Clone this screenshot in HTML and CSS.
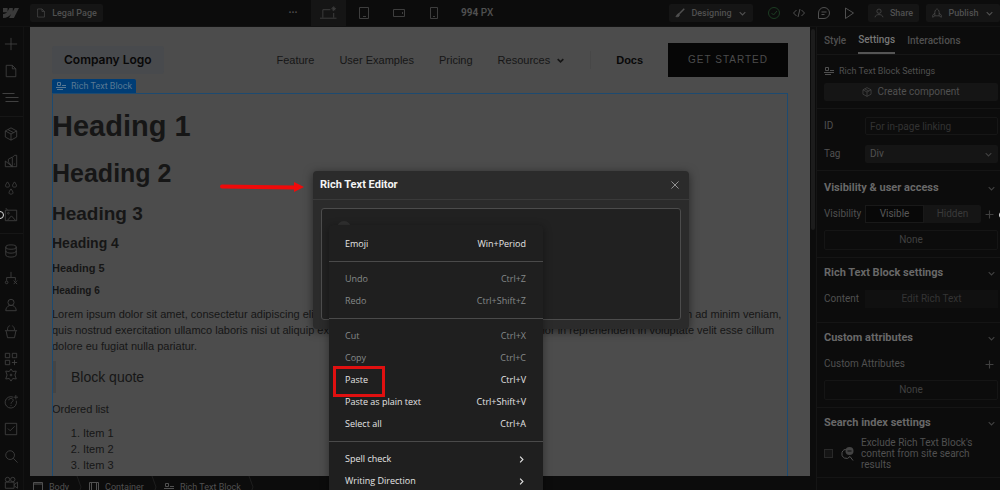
FILE: index.html
```html
<!DOCTYPE html>
<html lang="en">
  <head>
    <meta charset="utf-8">
    <title>Legal Page</title>
    <link rel="stylesheet" href="styles.css">
  </head>
  <body>
    <svg class="sprite" aria-hidden="true">
      <symbol id="i-page" viewBox="0 0 16 16"><path d="M2.5 1.5h7l4 4v9h-11zM9.5 1.5v4h4"/></symbol>
      <symbol id="i-plus" viewBox="0 0 16 16"><path d="M8 1v14M1 8h14"/></symbol>
      <symbol id="i-chevron" viewBox="0 0 16 16"><path d="M3 5.500l5 5 5-5"/></symbol>
      <symbol id="i-next" viewBox="0 0 16 16"><path d="M5.500 3l5 5-5 5"/></symbol>
      <symbol id="i-rich" viewBox="0 0 10 10"><path d="M1.500 1.500h3v3h-3zM6 4.500h4M0 6.500h10M1 8.500h6"/></symbol>
      <symbol id="i-cube" viewBox="0 0 16 16"><path d="M8 1l6.500 3.500v7L8 15l-6.500-3.500v-7zM1.500 4.500L8 8l6.500-3.500M8 8v7M4.500 3L11 6.500"/></symbol>
    </svg>

    <div class="app">
      <header class="topbar">
        <svg class="brand" viewBox="0 0 16 10"><path d="M16 0l-5.100 10H6.100l2.100-4.100C6.500 8.200 4 9.700 0 10V6s2.600-.2 4.100-1.800H0V0h4.600v3.500L6.400 0h3.400v3.500L11.700 0z"/></svg>
        <button class="chip chip-page"><svg class="icon small"><use href="#i-page"/></svg>Legal Page</button>
        <button class="dots" aria-label="More">···</button>
        <div class="devices">
          <button class="device active" aria-label="Desktop"><svg class="icon wide" viewBox="0 0 18 14"><path d="M3 12V3.500h8M14.500 7v5M0 12.500h17.500M14.500 0v5M12 2.500h5M13 1l3 3M16 1l-3 3"/></svg></button>
          <button class="device" aria-label="Tablet"><svg class="icon" viewBox="0 0 14 14"><path d="M2.500 1.500h9v11h-9zM6 10.500h3"/></svg></button>
          <button class="device" aria-label="Phone landscape"><svg class="icon" viewBox="0 0 14 14"><path d="M1.500 3.500h11v7h-11zM10.500 6v2"/></svg></button>
          <button class="device" aria-label="Phone"><svg class="icon" viewBox="0 0 14 14"><path d="M3.500 1.500h7v11h-7zM6 10.500h2"/></svg></button>
        </div>
        <span class="size"><b>994</b> PX</span>
        <div class="actions">
          <button class="chip chip-mode"><svg class="icon small" viewBox="0 0 14 14"><path d="M13 1L6 8" stroke-width="2"/><path class="solid" d="M6 8c-3-1-3 3-5 4 3 1 6 0 5-4z"/></svg>Designing<svg class="icon tiny"><use href="#i-chevron"/></svg></button>
          <button class="tool ok" aria-label="Saved"><svg class="icon" viewBox="0 0 14 14"><circle cx="7" cy="7" r="5.500"/><path d="M4.500 7l2 2 3.500-4"/></svg></button>
          <button class="tool" aria-label="Code"><svg class="icon" viewBox="0 0 14 14"><path d="M4.500 4l-3 3 3 3M9.500 4l3 3-3 3M8 3L6 11"/></svg></button>
          <button class="tool" aria-label="Comments"><svg class="icon" viewBox="0 0 14 14"><path d="M1.500 12.500V7A5.500 5.500 0 1 1 7 12.500zM4.500 6h5M4.500 8.500h3"/></svg></button>
          <button class="tool" aria-label="Preview"><svg class="icon" viewBox="0 0 14 14"><path d="M3.500 2l8 5-8 5.500z"/></svg></button>
          <button class="chip chip-share"><svg class="icon small" viewBox="0 0 14 14"><circle cx="7" cy="4.500" r="3"/><path d="M1.500 13c0-5 11-5 11 0"/></svg>Share</button>
          <button class="chip chip-publish"><svg class="icon small" viewBox="0 0 14 14"><path d="M4 11V6c0-3 2-4 3-5 1 1 3 2 3 5v5zM4 7l-3 3v3l3-2M10 7l3 3v3l-3-2"/></svg>Publish<svg class="icon tiny"><use href="#i-chevron"/></svg></button>
        </div>
      </header>

      <nav class="rail" aria-label="Tools">
        <div class="rail-group">
          <button aria-label="Add"><svg class="icon"><use href="#i-plus"/></svg></button>
          <button aria-label="Pages"><svg class="icon"><use href="#i-page"/></svg></button>
          <button aria-label="Navigator"><svg class="icon wide" viewBox="0 0 16 14"><path d="M0 2.500h12M3 6.500h13M3 10.500h13"/></svg></button>
        </div>
        <div class="rail-group">
          <button aria-label="Components"><svg class="icon"><use href="#i-cube"/></svg></button>
          <button aria-label="Variables"><svg class="icon" viewBox="0 0 16 16"><path d="M9.500 14.500V4L12 1.500h2.500v13zM9.500 3.500L5 6v3l4.500 5.500M1.500 8l8 6.500h-8zM12 11v1"/></svg></button>
          <button aria-label="Styles"><svg class="icon" viewBox="0 0 16 16"><path d="M4 1C1 5 1 7 4 7s3-2 0-6zM12 1c-3 4-3 6 0 6s3-2 0-6zM8 9c-3 4-3 6 0 6s3-2 0-6z"/></svg></button>
          <button aria-label="Assets"><svg class="icon" viewBox="0 0 16 16"><path d="M1.500 2.500h13v12h-13zM4 14l4.500-5 4.500 5M2 0l2 2.500"/><circle cx="5" cy="6" r="1"/></svg></button>
        </div>
        <div class="rail-group fill">
          <button aria-label="CMS"><svg class="icon" viewBox="0 0 16 16"><ellipse cx="8" cy="3.500" rx="6" ry="2.500"/><path d="M2 3.500v9c0 3.300 12 3.300 12 0v-9M2 8c0 3.300 12 3.300 12 0"/></svg></button>
          <button aria-label="Logic"><svg class="icon" viewBox="0 0 16 16"><path d="M8 1v6M3 11V7.500h10V11M11 11l4 4M15 11l-4 4"/><circle cx="3" cy="13" r="1.500"/></svg></button>
          <button aria-label="Users"><svg class="icon" viewBox="0 0 16 16"><circle cx="8" cy="5" r="3.500"/><path d="M2 14.500c0-3 2-5 4-6h4c2 1 4 3 4 6z"/></svg></button>
          <button aria-label="Ecommerce"><svg class="icon" viewBox="0 0 16 16"><path d="M1 6.500h14M2.500 7l1.500 7.500h8L13.500 7M4 6c0-6 3-5 3-5M12 6c0-4-2-5-3-5"/></svg></button>
          <button aria-label="Apps"><svg class="icon" viewBox="0 0 16 16"><path d="M1.500 1.500h5v5h-5zM9.500 1.500h5v5h-5zM1.500 9.500h5v5h-5zM12 9v6M9 12h6"/></svg></button>
        </div>
        <div class="rail-group bottom">
          <button aria-label="Settings"><svg class="icon" viewBox="0 0 16 16"><path d="M8 1l2 3 4-.5L12.500 8l1.500 4.500-4-.5-2 3-2-3-4 .5L3.500 8 2 3.500 6 4z"/><circle cx="8" cy="8" r="1"/></svg></button>
          <button aria-label="Help"><svg class="icon" viewBox="0 0 16 16"><path d="M10.500 2.500a6.500 6.500 0 1 0 3.500 4M13.500 0v5M11 2.500h5M5.500 6c0-3 5-2.500 5 0 0 2-2.500 1.500-2.500 4M8 11.500v1"/></svg></button>
          <button aria-label="Audit"><svg class="icon" viewBox="0 0 16 16"><path d="M1.500 1.500h13v13h-13zM4.500 7.500l2.500 2.500 5-5"/></svg></button>
          <button aria-label="Search"><svg class="icon" viewBox="0 0 16 16"><circle cx="7" cy="7" r="5"/><path d="M10.500 10.500l5 5"/></svg></button>
          <button aria-label="Video"><svg class="icon" viewBox="0 0 16 16"><path d="M1.500 7h10v7h-10zM11.500 10l4-3v7l-4-3"/><circle cx="4" cy="4" r="2.500"/><circle cx="10" cy="4" r="2.500"/></svg></button>
        </div>
      </nav>

      <main class="stage">
        <div class="canvas">
          <div class="site-header">
            <a class="logo" href="#">Company Logo</a>
            <nav class="site-nav">
              <a href="#">Feature</a>
              <a href="#">User Examples</a>
              <a href="#">Pricing</a>
              <a class="has-menu" href="#">Resources<svg class="icon tiny bold"><use href="#i-chevron"/></svg></a>
              <span class="rule"></span>
              <a class="docs" href="#">Docs</a>
              <button class="cta">GET STARTED</button>
            </nav>
          </div>
          <div class="tag"><svg class="icon small"><use href="#i-rich"/></svg>Rich Text Block</div>
          <article class="rich">
            <h1>Heading 1</h1>
            <h2>Heading 2</h2>
            <h3>Heading 3</h3>
            <h4>Heading 4</h4>
            <h5>Heading 5</h5>
            <h6>Heading 6</h6>
            <p>Lorem ipsum dolor sit amet, consectetur adipiscing elit, sed do eiusmod tempor incididunt ut labore et dolore magna aliqua. Ut enim ad minim veniam, quis nostrud exercitation ullamco laboris nisi ut aliquip ex ea commodo consequat. Duis aute irure dolor in reprehenderit in voluptate velit esse cillum dolore eu fugiat nulla pariatur.</p>
            <blockquote>Block quote</blockquote>
            <p>Ordered list</p>
            <ol>
              <li>Item 1</li>
              <li>Item 2</li>
              <li>Item 3</li>
            </ol>
          </article>
        </div>
        <div class="scroll"><div class="thumb"></div></div>
        <footer class="crumbs">
          <a href="#"><svg class="icon small" viewBox="0 0 10 10"><path d="M.5.500h9v9h-9zM.5 2h9"/></svg>Body</a>
          <svg class="icon sep" viewBox="0 0 6 22"><path d="M1 0l4 11-4 11"/></svg>
          <a href="#"><svg class="icon small" viewBox="0 0 10 10"><path d="M.5.500h9v9h-9zM2.500.500v9M7.500.500v9"/></svg>Container</a>
          <svg class="icon sep" viewBox="0 0 6 22"><path d="M1 0l4 11-4 11"/></svg>
          <a href="#"><svg class="icon small"><use href="#i-rich"/></svg>Rich Text Block</a>
          <svg class="icon sep" viewBox="0 0 6 22"><path d="M1 0l4 11-4 11"/></svg>
        </footer>
      </main>

      <aside class="panel">
        <div class="tabs" role="tablist">
          <button role="tab">Style</button>
          <button role="tab" class="current" aria-selected="true">Settings</button>
          <button role="tab">Interactions</button>
        </div>
        <section>
          <div class="element"><svg class="icon small"><use href="#i-rich"/></svg>Rich Text Block Settings</div>
          <button class="block-btn"><svg class="icon small"><use href="#i-cube"/></svg>Create component</button>
        </section>
        <section class="fields">
          <div class="row"><label for="el-id">ID</label><input id="el-id" type="text" placeholder="For in-page linking"></div>
          <div class="row"><label for="el-tag">Tag</label>
            <div class="select"><select id="el-tag"><option>Div</option></select><svg class="icon tiny"><use href="#i-chevron"/></svg></div>
          </div>
        </section>
        <section>
          <h2>Visibility &amp; user access<svg class="icon tiny"><use href="#i-chevron"/></svg></h2>
          <div class="row"><span class="name">Visibility</span>
            <div class="segment"><button class="on">Visible</button><button>Hidden</button></div>
            <button class="add" aria-label="Add condition"><svg class="icon tiny"><use href="#i-plus"/></svg></button>
          </div>
          <div class="none">None</div>
        </section>
        <section class="compact content">
          <h2>Rich Text Block settings<svg class="icon tiny"><use href="#i-chevron"/></svg></h2>
          <div class="row"><span class="name">Content</span><button class="edit" disabled>Edit Rich Text</button></div>
        </section>
        <section class="compact">
          <h2>Custom attributes<svg class="icon tiny"><use href="#i-chevron"/></svg></h2>
          <div class="row"><span>Custom Attributes</span><button class="add" aria-label="Add attribute"><svg class="icon tiny"><use href="#i-plus"/></svg></button></div>
          <div class="none">None</div>
        </section>
        <section class="compact">
          <h2>Search index settings<svg class="icon tiny"><use href="#i-chevron"/></svg></h2>
          <div class="exclude">
            <input type="checkbox" id="exclude">
            <svg class="icon" viewBox="0 0 14 14"><path d="M7 2.500a4.500 4.500 0 1 0 3 7l3 4"/><circle class="dot" cx="9.500" cy="4" r="4"/><path class="minus" d="M7.500 4h4"/></svg>
            <label for="exclude">Exclude Rich Text Block's content from site search results</label>
          </div>
        </section>
      </aside>
    </div>

    <div class="handle left"></div>
    <div class="handle right"></div>
    <svg class="arrow" viewBox="0 0 84 12"><path d="M2 5.500l74 1" stroke-width="4"/><path class="head" d="M74 1l10 5-10 5z"/></svg>

    <div class="modal" role="dialog" aria-labelledby="modal-title">
      <div class="modal-head">
        <span id="modal-title">Rich Text Editor</span>
        <button aria-label="Close"><svg class="icon small" viewBox="0 0 14 14"><path d="M2 2l10 10M12 2L2 12"/></svg></button>
      </div>
      <div class="editor"><span class="add-dot"></span></div>

      <div class="menu" role="menu">
        <button role="menuitem">Emoji<span>Win+Period</span></button>
        <hr>
        <button role="menuitem" disabled>Undo<span>Ctrl+Z</span></button>
        <button role="menuitem" disabled>Redo<span>Ctrl+Shift+Z</span></button>
        <hr>
        <button role="menuitem" disabled>Cut<span>Ctrl+X</span></button>
        <button role="menuitem" disabled>Copy<span>Ctrl+C</span></button>
        <button role="menuitem" class="marked">Paste<span>Ctrl+V</span></button>
        <button role="menuitem">Paste as plain text<span>Ctrl+Shift+V</span></button>
        <button role="menuitem">Select all<span>Ctrl+A</span></button>
        <hr>
        <button role="menuitem">Spell check<svg class="icon tiny"><use href="#i-next"/></svg></button>
        <button role="menuitem">Writing Direction<svg class="icon tiny"><use href="#i-next"/></svg></button>
      </div>
    </div>
  </body>
</html>
```

FILE: styles.css
```css
*, ::before, ::after {
  box-sizing: border-box;
}
body {
  margin: 0;
  height: 100vh;
  overflow: hidden;
  background: #0c0c0c;
  color: #505050;
  font: 10px/12px Roboto, sans-serif;
}
button, input, select {
  font: inherit;
  color: inherit;
  background: none;
  border: 0;
  padding: 0;
  margin: 0;
}
a {
  color: inherit;
  text-decoration: none;
}
.sprite {
  display: none;
}
.icon {
  width: 14px;
  height: 14px;
  flex: none;
  fill: none;
  stroke: currentColor;
  stroke-width: 1;
}
.icon.wide {
  width: 17px;
}
.icon.small {
  width: 10px;
  height: 10px;
}
.icon.tiny {
  width: 9px;
  height: 9px;
  stroke-width: 2;
}
.icon.bold {
  stroke-width: 3;
}
.icon .solid {
  fill: currentColor;
}
.app {
  display: grid;
  grid-template: 27px minmax(0, 1fr) / 24px minmax(0, 1fr) 184px;
  height: 100vh;
}

/* top bar */
.topbar {
  grid-column: 1 / -1;
  display: flex;
  align-items: center;
  border-bottom: 1px solid #121212;
}
.brand {
  width: 16px;
  margin: 0 11px 0 3px;
  fill: #3a3a3a;
}
.chip {
  display: flex;
  align-items: center;
  justify-content: center;
  gap: 6px;
  height: 18px;
  border-radius: 2px;
  background: #151515;
  font-size: 9px;
  font-weight: 500;
}
.chip-page {
  width: 73px;
}
.dots {
  width: 16px;
  margin-left: 182px;
  font-weight: 700;
}
.devices {
  display: flex;
  align-self: stretch;
  margin-left: 10px;
}
.device {
  display: flex;
  align-items: center;
  justify-content: center;
  width: 35px;
  color: #3e3e3e;
}
.device.active {
  background: #151515;
}
.size {
  margin-left: 10px;
  font-weight: 500;
}
.actions {
  display: flex;
  align-items: center;
  margin-left: auto;
}
.chip-mode {
  width: 84px;
  margin-right: 8px;
}
.tool {
  display: flex;
  justify-content: center;
  width: 25px;
}
.tool.ok {
  color: #1c3c22;
}
.chip-share {
  width: 51px;
  margin: 0 7px;
}
.chip-publish {
  width: 74px;
}

/* left rail */
.rail {
  display: flex;
  flex-direction: column;
  min-height: 0;
  overflow: hidden;
  border-right: 1px solid #121212;
  color: #404040;
}
.rail-group {
  padding: 3px 0 5px;
  border-bottom: 1px solid #161616;
}
.rail-group button {
  display: flex;
  align-items: center;
  justify-content: center;
  width: 21px;
  height: 27px;
}
.rail-group.fill {
  flex: 1;
  min-height: 0;
  border: 0;
}
.rail-group.bottom {
  flex: none;
  padding: 0;
  margin-bottom: -6px;
  border: 0;
}

/* page being edited */
.stage {
  display: grid;
  grid-template: minmax(0, 1fr) 14px / minmax(0, 1fr) 6px;
}
.canvas {
  margin-left: 6px;
  padding: 16px 22px 0;
  overflow: hidden;
  background: #4c4c4c;
  color: #161616;
  font: 11px/16px "Liberation Sans", Arial, sans-serif;
}
.site-header {
  display: flex;
  align-items: center;
  justify-content: space-between;
  height: 34px;
}
.logo {
  padding: 6px 12px;
  border-radius: 3px;
  background: #484a4d;
  color: #080808;
  font: 600 12px/16px Inter, sans-serif;
}
.site-nav {
  display: flex;
  align-items: center;
  gap: 25px;
}
.has-menu {
  display: flex;
  align-items: center;
  gap: 6px;
}
.rule {
  width: 1px;
  height: 18px;
  background: #474747;
}
.docs {
  color: #080808;
  font-weight: 700;
}
.cta {
  height: 34px;
  padding: 0 20px;
  background: #060606;
  color: #4c4c4c;
  font-size: 10px;
  letter-spacing: 1px;
}
.tag {
  display: flex;
  align-items: center;
  gap: 5px;
  width: max-content;
  height: 14px;
  margin-top: 2px;
  padding: 0 4px;
  border-radius: 2px 2px 0 0;
  background: #003d75;
  color: #597993;
  font: 9px/14px Roboto, sans-serif;
}
.rich {
  height: 400px;
  padding-top: 1px;
  outline: 1px solid #1d4a70;
  outline-offset: -1px;
}
.rich > * {
  margin: 8px 0 0;
}
.rich h1 {
  margin-top: 15px;
  font-size: 29px;
  line-height: 34px;
}
.rich h2 {
  margin-top: 16px;
  font-size: 25px;
  line-height: 28px;
}
.rich h3 {
  margin-top: 15px;
  font-size: 19px;
  line-height: 24px;
}
.rich h4 {
  font-size: 14px;
  line-height: 18px;
}
.rich h5 {
  font-size: 11px;
  line-height: 16px;
}
.rich h6 {
  font-size: 10px;
  line-height: 14px;
}
.rich blockquote {
  margin-top: 7px;
  padding: 8px 15px;
  border-left: 4px solid #444;
  font-size: 14px;
}
.rich ol {
  padding-left: 31px;
}
.scroll {
  padding: 2px 1px 0;
}
.thumb {
  height: 201px;
  border-radius: 2px;
  background: #1c1c1c;
}
.crumbs {
  grid-column: 1 / -1;
  display: flex;
  overflow: hidden;
  padding-left: 9px;
  font-size: 9px;
}
.crumbs a {
  display: flex;
  align-items: center;
  gap: 6px;
  height: 22px;
}
.icon.sep {
  width: 6px;
  height: 22px;
  margin: 0 7px;
  stroke: #1e1e1e;
}

/* settings panel */
.panel {
  overflow: hidden;
  border-left: 1px solid #151515;
}
.tabs {
  display: flex;
  gap: 12px;
  height: 28px;
  padding-left: 7px;
  border-bottom: 1px solid #161616;
  font-weight: 500;
}
.tabs .current {
  border-bottom: 2px solid #555;
  color: #777;
}
.panel section {
  padding: 8px 2px 7px 7px;
  border-bottom: 1px solid #151515;
}
.panel .compact {
  padding-top: 6px;
}
.panel h2 {
  display: flex;
  align-items: center;
  justify-content: space-between;
  margin: 0;
  padding-right: 2px;
  height: 18px;
  color: #686868;
  font-size: 11px;
  font-weight: 700;
}
.element {
  display: flex;
  align-items: center;
  gap: 5px;
  height: 16px;
  font-size: 9px;
}
.block-btn {
  display: flex;
  align-items: center;
  justify-content: center;
  gap: 5px;
  width: 100%;
  height: 18px;
  margin-top: 4px;
  border-radius: 2px;
  background: #151515;
}
.row {
  display: flex;
  align-items: center;
  height: 18px;
}
.fields .row + .row {
  margin-top: 10px;
}
h2 + .row {
  margin-top: 8px;
}
.row label, .name {
  width: 41px;
}
.row input, .select {
  flex: 1;
  min-width: 0;
  height: 18px;
  border-radius: 2px;
}
.row input {
  padding: 0 4px;
  border: 1px solid #161616;
}
.row input::placeholder {
  color: #333;
}
.select {
  display: flex;
  align-items: center;
  padding: 0 5px;
  background: #151515;
}
.select select {
  flex: 1;
  appearance: none;
}
.panel .tiny {
  color: #404040;
}
.segment {
  display: flex;
  width: 116px;
  height: 18px;
  border-radius: 2px;
  background: #151515;
}
.segment button {
  flex: 1;
  color: #3a3a3a;
}
.segment .on {
  border: 1px solid #191919;
  background: #080808;
  color: #585858;
}
.add {
  display: flex;
  margin: 0 4px 0 auto;
}
.none {
  margin-top: 7px;
  border: 1px solid #151515;
  border-radius: 2px;
  color: #404040;
  line-height: 18px;
  text-align: center;
}
.content .row {
  margin-bottom: 7px;
}
.edit {
  flex: 1;
  height: 18px;
  background: #101010;
  color: #343434;
}
.exclude {
  display: flex;
  align-items: center;
  gap: 7px;
  padding-top: 5px;
  line-height: 11px;
}
.exclude input {
  flex: none;
  width: 9px;
  height: 9px;
  appearance: none;
  border: 1px solid #292929;
  background: #151515;
}
.exclude label {
  width: 118px;
}
.dot {
  fill: #444;
  stroke: none;
}
.minus {
  stroke: #0c0c0c;
}

/* things lying over the page */
.handle {
  position: absolute;
  top: 211px;
  width: 8px;
  height: 8px;
  border: 1px solid #ddd;
  border-radius: 50%;
}
.handle.left {
  left: -4px;
}
.handle.right {
  right: -7px;
  background: #ddd;
}
.arrow {
  position: absolute;
  left: 220px;
  top: 181px;
  width: 84px;
  height: 12px;
  stroke: #f00a0a;
  stroke-linecap: round;
}
.arrow .head {
  fill: #f00a0a;
  stroke: none;
}
.modal {
  position: absolute;
  left: 50%;
  top: 171px;
  width: 376px;
  margin-left: -187px;
  border-radius: 4px;
  background: #2b2b2b;
  box-shadow: 0 2px 10px rgba(0, 0, 0, 0.5);
}
.modal-head {
  display: flex;
  align-items: center;
  justify-content: space-between;
  height: 29px;
  padding: 0 9px 0 7px;
  border-bottom: 1px solid #3a3a3a;
  color: #f4f4f4;
  font-size: 11px;
  font-weight: 700;
}
.modal-head button {
  display: flex;
  color: #bbb;
}
.editor {
  height: 112px;
  margin: 8px;
  border: 1px solid #4c4c4c;
  border-radius: 3px;
  background: #212121;
}
.add-dot {
  display: block;
  width: 14px;
  height: 14px;
  margin: 12px 0 0 15px;
  border-radius: 50%;
  background: #303030;
}
.modal::after {
  content: "";
  display: block;
  height: 1px;
}
.menu {
  position: absolute;
  left: 16px;
  top: 54px;
  width: 214px;
  padding: 8px 0;
  border-radius: 4px;
  background: #1f1f1f;
  box-shadow: 0 2px 8px rgba(0, 0, 0, 0.4);
  color: #e4e4e4;
  font: 9px/14px "Open Sans", sans-serif;
}
.menu button {
  position: relative;
  display: flex;
  align-items: center;
  justify-content: space-between;
  width: 100%;
  height: 22px;
  padding: 0 17px 0 16px;
}
.menu button:disabled {
  color: #858989;
}
.menu hr {
  margin: 6px 0;
  border: 0;
  border-top: 1px solid #4a4a4a;
}
.menu .marked::before {
  content: "";
  position: absolute;
  left: 4px;
  top: -3px;
  width: 52px;
  height: 31px;
  border: 3px solid #e01010;
}
```
